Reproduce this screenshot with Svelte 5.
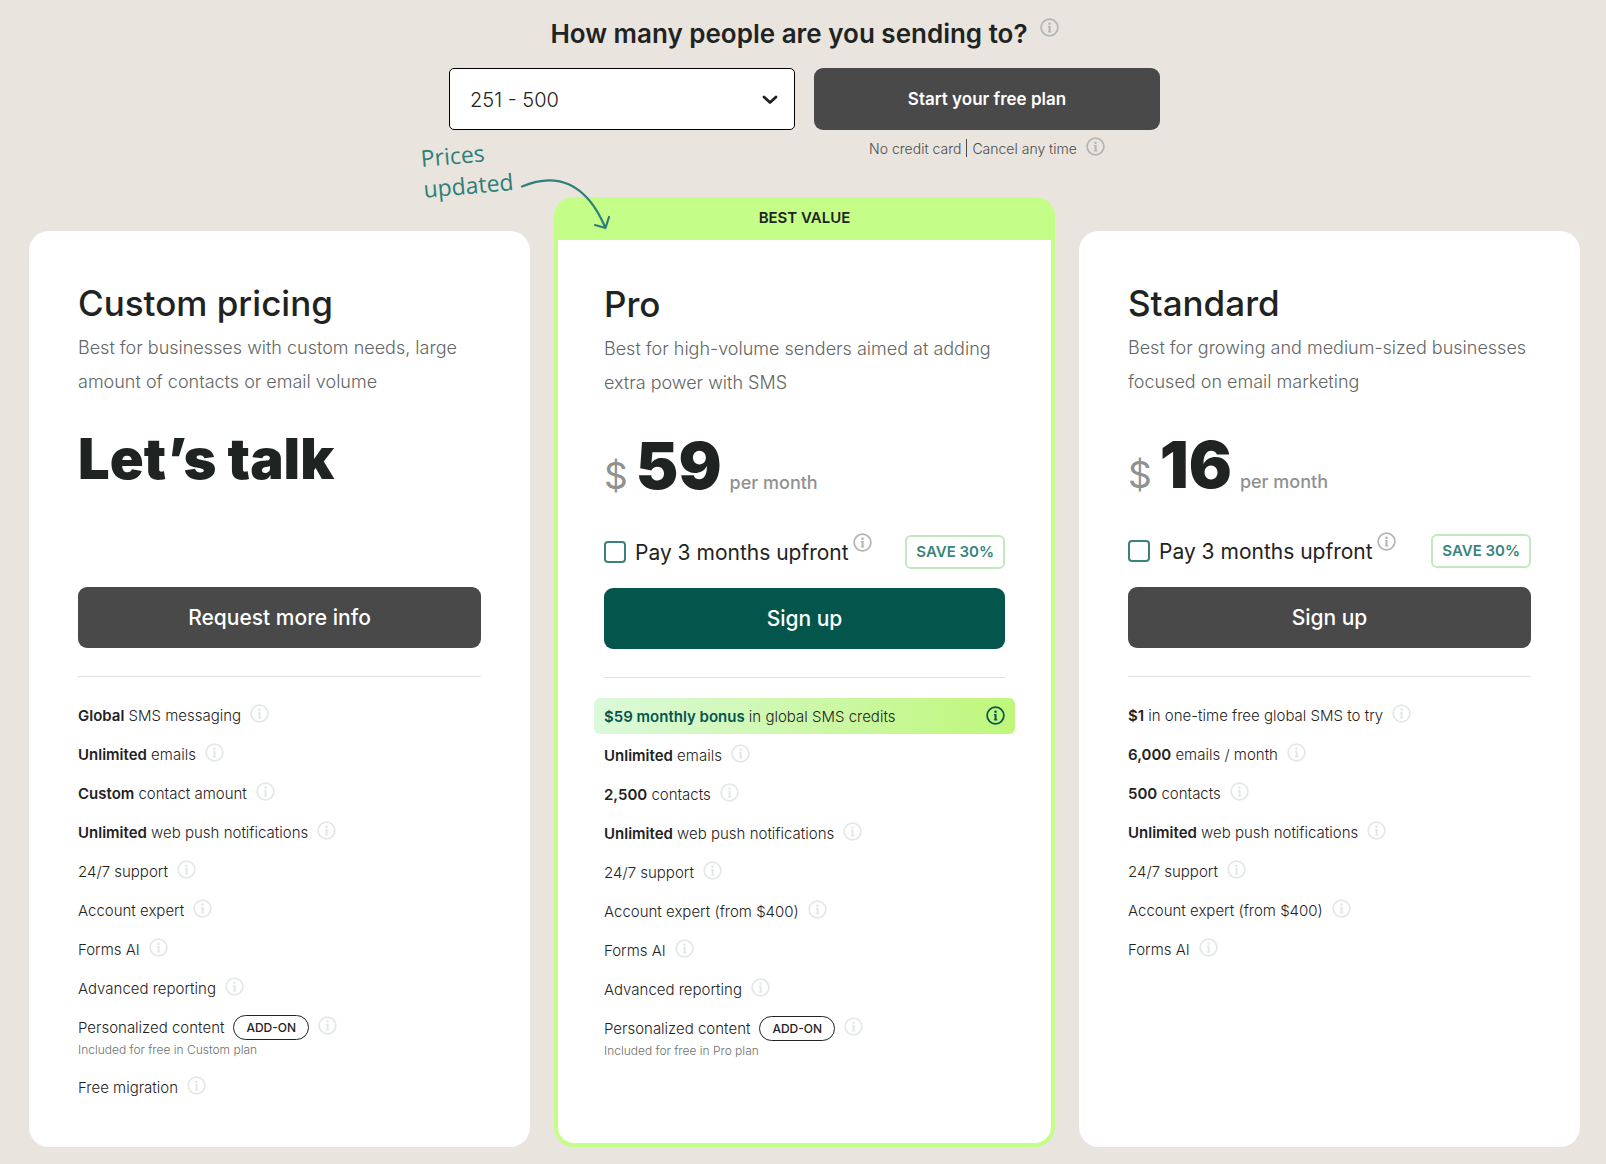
<script>
  const plans = [
    {
      id: 'custom',
      name: 'Custom pricing',
      lines: ['Best for businesses with custom needs, large', 'amount of contacts or email volume'],
      talk: 'Let’s talk',
      cta: 'Request more info',
      features: [
        { strong: 'Global', text: 'SMS messaging' },
        { strong: 'Unlimited', text: 'emails' },
        { strong: 'Custom', text: 'contact amount' },
        { strong: 'Unlimited', text: 'web push notifications' },
        { text: '24/7 support' },
        { text: 'Account expert' },
        { text: 'Forms AI' },
        { text: 'Advanced reporting' },
        { text: 'Personalized content', addon: true, note: 'Included for free in Custom plan' },
        { text: 'Free migration' }
      ]
    },
    {
      id: 'pro',
      name: 'Pro',
      best: true,
      lines: ['Best for high-volume senders aimed at adding', 'extra power with SMS'],
      price: 59,
      cta: 'Sign up',
      features: [
        { strong: '$59 monthly bonus', text: 'in global SMS credits', bonus: true },
        { strong: 'Unlimited', text: 'emails' },
        { strong: '2,500', text: 'contacts' },
        { strong: 'Unlimited', text: 'web push notifications' },
        { text: '24/7 support' },
        { text: 'Account expert (from $400)' },
        { text: 'Forms AI' },
        { text: 'Advanced reporting' },
        { text: 'Personalized content', addon: true, note: 'Included for free in Pro plan' }
      ]
    },
    {
      id: 'standard',
      name: 'Standard',
      lines: ['Best for growing and medium-sized businesses', 'focused on email marketing'],
      price: 16,
      cta: 'Sign up',
      features: [
        { strong: '$1', text: 'in one-time free global SMS to try' },
        { strong: '6,000', text: 'emails / month' },
        { strong: '500', text: 'contacts' },
        { strong: 'Unlimited', text: 'web push notifications' },
        { text: '24/7 support' },
        { text: 'Account expert (from $400)' },
        { text: 'Forms AI' }
      ]
    }
  ];

  let contacts = $state('251 - 500');
</script>

{#snippet info()}
  <button class="info" type="button" aria-label="More information">
    <svg viewBox="0 0 19 19" width="19" height="19" aria-hidden="true">
      <circle cx="9.5" cy="9.5" r="8.4" fill="none" stroke="currentColor" stroke-width="1.7" />
      <circle cx="9.5" cy="5.7" r="1.3" fill="currentColor" />
      <path d="M8 8h2.600v5.200h.7v1.200H7.900v-1.200h.7V9.200H8z" fill="currentColor" />
    </svg>
  </button>
{/snippet}

<main>
  <header>
    <div class="question">
      <h1><label for="contacts">How many people are you sending to?</label></h1>
      {@render info()}
    </div>
    <div class="controls">
      <div class="picker">
        <select id="contacts" bind:value={contacts}>
          <option>0 - 250</option>
          <option>251 - 500</option>
          <option>501 - 1,000</option>
        </select>
        <svg class="chevron" viewBox="0 0 16 10" width="16" height="10" aria-hidden="true">
          <path d="M2 2l6 5.600L14 2" fill="none" stroke="currentColor" stroke-width="2.800" stroke-linecap="round" stroke-linejoin="round" />
        </svg>
      </div>
      <div class="start">
        <button class="cta small" type="button">Start your free plan</button>
        <div class="terms">
          <span>No credit card</span>
          <span class="bar"></span>
          <span class="cancel">Cancel any time</span>
          {@render info()}
        </div>
      </div>
    </div>
  </header>

  <div class="plans">
    {#each plans as plan (plan.id)}
      <section class="card" class:best={plan.best}>
        {#if plan.best}
          <div class="banner">BEST VALUE</div>
          <div class="updated">Prices<br />updated</div>
          <svg class="arrow" viewBox="0 0 92 54" width="92" height="54" aria-hidden="true">
            <path d="M2 7.500C36 -7 66 3 85.500 49M75 46l10.500 3L89 38" fill="none" stroke="currentColor" stroke-width="2.200" stroke-linecap="round" stroke-linejoin="round" />
          </svg>
        {/if}
        <div class="body">
          <h2>{plan.name}</h2>
          <p class="desc">{plan.lines[0]}<br />{plan.lines[1]}</p>
          <div class="price">
            {#if plan.talk}
              <span class="talk">{plan.talk}</span>
            {:else}
              <span class="currency">$</span>
              <span class="amount">{plan.price}</span>
              <span class="period">per month</span>
            {/if}
          </div>
          <div class="upfront">
            {#if plan.price}
              <input type="checkbox" id="upfront-{plan.id}" />
              <label for="upfront-{plan.id}">Pay 3 months upfront</label>
              {@render info()}
              <span class="save">SAVE 30%</span>
            {/if}
          </div>
          <button class="cta" class:green={plan.best} type="button">{plan.cta}</button>
          <hr />
          <ul>
            {#each plan.features as f}
              <li>
                <div class="row" class:bonus={f.bonus}>
                  <span>{#if f.strong}<strong>{f.strong}</strong>{' '}{/if}{f.text}</span>
                  {#if f.addon}<span class="addon">ADD-ON</span>{/if}
                  {@render info()}
                </div>
                {#if f.note}<div class="note">{f.note}</div>{/if}
              </li>
            {/each}
          </ul>
        </div>
      </section>
    {/each}
  </div>
</main>

<style>
  :global(body) {
    margin: 0;
    background: #e9e4de;
  }
  main {
    padding: 15px 26px 15px 29px;
    font-family: Inter, 'Liberation Sans', sans-serif;
    color: #1f2322;
  }
  button,
  select,
  input {
    font: inherit;
    margin: 0;
  }
  header {
    display: flex;
    flex-direction: column;
    align-items: center;
  }
  .question {
    display: flex;
    align-items: center;
    gap: 12px;
  }
  .question .info {
    margin-bottom: 14px;
  }
  h1 {
    margin: 0;
    font-size: 26px;
    line-height: 38px;
    font-weight: 600;
  }
  .info {
    display: flex;
    flex: none;
    padding: 0;
    border: 0;
    background: none;
    color: #b3b5b1;
  }
  .controls {
    display: grid;
    grid-template-columns: 346px 346px;
    gap: 19px;
    margin-top: 15px;
  }
  .picker {
    position: relative;
    height: 62px;
  }
  select {
    width: 100%;
    height: 62px;
    padding: 2px 20px 0;
    appearance: none;
    border: 1px solid #000;
    border-radius: 5px;
    background: #fff;
    color: #1f2322;
    font-size: 20px;
    font-weight: 300;
  }
  .chevron {
    position: absolute;
    top: 27px;
    right: 17px;
    pointer-events: none;
  }
  .cta {
    display: block;
    width: 100%;
    height: 61px;
    padding: 0;
    border: 0;
    border-radius: 9px;
    background: #494949;
    color: #fff;
    font-size: 21px;
    font-weight: 500;
  }
  .cta.small {
    height: 62px;
    font-size: 17px;
    font-weight: 600;
  }
  .cta.green {
    background: #04564d;
  }
  .terms {
    display: flex;
    justify-content: center;
    align-items: center;
    gap: 5px;
    height: 36px;
    font-size: 14px;
    font-weight: 300;
    color: #4a4c4a;
  }
  .bar {
    width: 1px;
    height: 18px;
    background: #4a4c4a;
  }
  .cancel {
    margin-right: 4px;
  }
  .terms .info {
    margin-bottom: 4px;
  }
  .plans {
    display: grid;
    grid-template-columns: repeat(3, minmax(0, 1fr));
    gap: 24px;
    margin-top: 31px;
  }
  .card {
    position: relative;
    margin-top: 34px;
    border-radius: 20px;
    background: #fff;
  }
  .body {
    padding: 51px 49px 48px;
  }
  .card.best {
    margin-top: 0;
    border: 4px solid #c4fd88;
    border-top: 0;
  }
  .best .body {
    padding: 43px 46px;
  }
  .banner {
    margin: 0 -4px;
    border-radius: 20px 20px 0 0;
    background: #c4fd88;
    text-align: center;
    font-size: 15px;
    line-height: 42px;
    padding-bottom: 1px;
    font-weight: 600;
  }
  .updated {
    position: absolute;
    top: -58px;
    left: -136px;
    transform: rotate(-5deg);
    font-family: 'Open Sans', sans-serif;
    font-size: 23px;
    line-height: 31px;
    font-weight: 400;
    color: #2e7f77;
  }
  .arrow {
    position: absolute;
    top: -18px;
    left: -38px;
    color: #2e7f77;
  }
  h2 {
    margin: 0;
    font-size: 35px;
    line-height: 42px;
    font-weight: 500;
  }
  .desc {
    margin: 7px 0 0;
    font-size: 18px;
    line-height: 34px;
    font-weight: 300;
    color: #626664;
  }
  .price {
    display: flex;
    align-items: baseline;
    height: 72px;
    margin-top: 32px;
    line-height: 68px;
  }
  .talk {
    font-size: 56px;
    line-height: 56px;
    font-weight: 900;
  }
  .currency {
    font-size: 37px;
    color: #8f9290;
  }
  .amount {
    margin: 0 8px;
    font-size: 64px;
    font-weight: 900;
  }
  .period {
    font-size: 18px;
    font-weight: 500;
    color: #8f9290;
  }
  .upfront {
    display: flex;
    align-items: center;
    height: 34px;
    margin: 31px 0 19px;
    font-size: 21px;
  }
  .upfront .info {
    margin: 0 auto 20px 4px;
  }
  .upfront input {
    flex: none;
    width: 22px;
    height: 22px;
    margin-right: 9px;
    appearance: none;
    border: 2px solid #3a837d;
    border-radius: 4px;
    background: #fff;
  }
  .upfront input:checked {
    background: #3a837d;
  }
  .save {
    padding: 0 9px;
    border: 2px solid #c3e7bf;
    border-radius: 6px;
    font-size: 15px;
    line-height: 30px;
    font-weight: 600;
    color: #37847c;
  }
  hr {
    height: 1px;
    margin: 28px 0 26px;
    border: 0;
    background: #dfe3e1;
  }
  ul {
    display: flex;
    flex-direction: column;
    gap: 15px;
    margin: 0;
    padding: 0;
    list-style: none;
  }
  .row {
    display: flex;
    align-items: center;
    gap: 9px;
    height: 24px;
    font-size: 15px;
    font-weight: 300;
  }
  strong {
    font-weight: 600;
  }
  .row .info {
    margin-bottom: 4px;
    color: #e3e8e6;
  }
  .bonus {
    justify-content: space-between;
    height: 36px;
    margin: -6px -10px;
    padding: 0 10px;
    border-radius: 6px;
    background: linear-gradient(90deg, #dbf9db, #bff77a);
  }
  .row.bonus .info {
    margin-bottom: 2px;
  }
  .bonus strong,
  .row.bonus .info {
    color: #04564d;
  }
  .addon {
    padding: 0 12px;
    border: 1px solid #1f2322;
    border-radius: 13px;
    font-size: 12px;
    line-height: 23px;
    font-weight: 500;
  }
  .note {
    font-size: 12px;
    line-height: 21px;
    font-weight: 300;
    color: #6d716f;
  }
</style>
